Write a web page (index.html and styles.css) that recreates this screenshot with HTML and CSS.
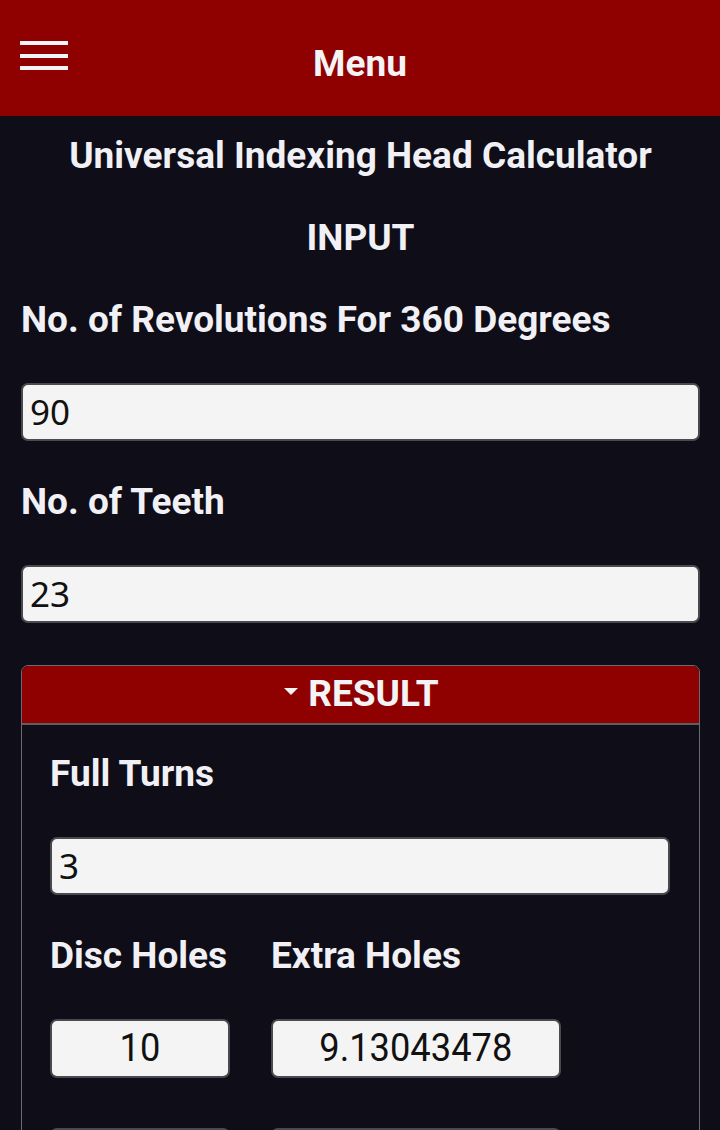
FILE: index.html
```html
<!DOCTYPE html>
<html lang="en">
<head>
<meta charset="utf-8">
<title>Universal Indexing Head Calculator</title>
<link rel="stylesheet" href="styles.css">
</head>
<body>
<header class="topbar">
  <button class="burger" aria-label="Menu">
    <span></span><span></span><span></span>
  </button>
  <div class="topbar-title">Menu</div>
</header>
<main class="content">
  <h1 class="title">Universal Indexing Head Calculator</h1>
  <h2 class="section">INPUT</h2>
  <label class="label">No. of Revolutions For 360 Degrees</label>
  <div class="field">90</div>
  <label class="label">No. of Teeth</label>
  <div class="field">23</div>

  <section class="panel">
    <div class="panel-head"><span class="caret"></span>RESULT</div>
    <div class="panel-body">
      <label class="label">Full Turns</label>
      <div class="field">3</div>
      <div class="cols">
        <div class="col col-a">
          <label class="label">Disc Holes</label>
          <div class="box"><span>10</span></div>
          <div class="box"><span></span></div>
        </div>
        <div class="col col-b">
          <label class="label">Extra Holes</label>
          <div class="box"><span>9.13043478</span></div>
          <div class="box"><span></span></div>
        </div>
      </div>
    </div>
  </section>
</main>
</body>
</html>
```

FILE: styles.css
```css
* { box-sizing: border-box; }
html, body { margin: 0; padding: 0; }
body {
  background: #0e0d18;
  color: #f1f1f5;
  font-family: Roboto, "Liberation Sans", sans-serif;
  width: 720px;
  height: 1130px;
  overflow: hidden;
}
.topbar {
  height: 116px;
  background: #8f0000;
  position: relative;
  display: flex;
  align-items: center;
  justify-content: center;
}
.burger {
  position: absolute;
  left: 20px;
  top: 41px;
  width: 48px;
  height: 29px;
  padding: 0;
  border: 0;
  background: transparent;
  display: flex;
  flex-direction: column;
  justify-content: space-between;
}
.burger span {
  display: block;
  height: 4px;
  width: 48px;
  background: #f4f4f6;
}
.topbar-title {
  font-size: 37px;
  font-weight: 700;
  color: #f4f4f6;
  line-height: 40px;
  margin-top: 12px;
}
.content {
  padding: 19px 20px 0 21px;
}
.title, .section {
  margin: 0 0 42px;
  text-align: center;
  font-size: 37px;
  font-weight: 700;
  line-height: 38px;
  padding-top: 2px;
}
.label {
  display: block;
  font-size: 37px;
  font-weight: 700;
  line-height: 38px;
  padding-top: 2px;
  margin-bottom: 44px;
  white-space: nowrap;
}
.field {
  height: 58px;
  background: #f4f4f4;
  border: 2px solid #4a4a4e;
  border-radius: 7px;
  color: #111;
  font-family: "Noto Sans", "Open Sans", sans-serif;
  font-size: 35px;
  line-height: 54px;
  padding-left: 7px;
  margin-bottom: 40px;
}
.content > .field:last-of-type { margin-bottom: 42px; }
.panel {
  border: 1px solid #6a6a70;
  border-radius: 7px 7px 0 0;
  height: 600px;
}
.panel-head {
  height: 59px;
  background: #8f0000;
  border-bottom: 2px solid #5e5e62;
  border-radius: 6px 6px 0 0;
  display: flex;
  align-items: center;
  justify-content: center;
  font-size: 37px;
  font-weight: 700;
  color: #f4f4f6;
  padding-left: 2px;
  padding-bottom: 2px;
}
.caret {
  width: 0;
  height: 0;
  border-left: 7px solid transparent;
  border-right: 7px solid transparent;
  border-top: 7px solid #f4f4f6;
  margin-right: 10px;
  margin-top: -5px;
}
.panel-body {
  padding: 28px 29px 0 28px;
}
.cols {
  display: flex;
  gap: 41px;
}
.col-a { width: 180px; }
.col-b { width: 290px; }
.box {
  height: 59px;
  background: #f4f4f4;
  border: 2px solid #4a4a4e;
  border-radius: 7px;
  color: #111;
  display: flex;
  align-items: center;
  justify-content: center;
  margin-bottom: 50px;
  overflow: hidden;
}
.box span {
  font-family: Roboto, sans-serif;
  font-size: 39px;
  display: inline-block;
  transform: scaleX(0.93);
  line-height: 1;
}
```
